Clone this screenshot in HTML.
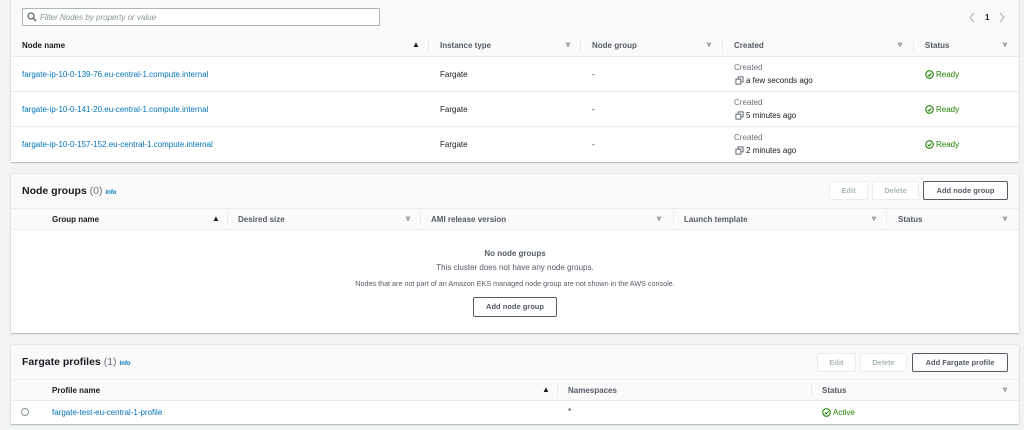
<!DOCTYPE html>
<html><head><style>
*{box-sizing:border-box;margin:0;padding:0}
body{width:1024px;height:430px;background:#f2f3f3;font-family:"Liberation Sans",sans-serif;font-size:8px;color:#16191f;position:relative;overflow:hidden}
.a{position:absolute;white-space:nowrap}
.p{position:absolute;left:11px;width:1008px;background:#fff;box-shadow:0 1px 1px rgba(0,33,43,.25),0 0 1px rgba(0,33,43,.2)}
.hd{position:absolute;left:0;width:100%;background:#fafafa;border-bottom:1px solid #eaeded}
.ch{position:absolute;left:0;width:100%;background:#fafafa;border-bottom:1px solid #eaeded;font-weight:bold;color:#545b64}
.ch.b{color:#16191f}
.sep{position:absolute;width:1px;height:12px;background:#eaeded}
.row{position:absolute;left:0;width:100%;border-bottom:1px solid #eaeded}
.lk{color:#0073bb}
.g{color:#1d8102}
.g svg,.cp svg{vertical-align:-2px;margin-right:2px}
.btn{position:absolute;height:19px;border:1px solid #aab7b8;border-radius:2px;font-weight:bold;font-size:7.5px;text-align:center;line-height:17px;background:#fff;color:#545b64}
.btn.d{border-color:#eaeded;color:#aab7b8}
.h2{font-size:10.5px;font-weight:bold}
.h2 span{font-weight:normal;color:#687078}
.info{color:#0073bb;font-size:6px;font-weight:bold;margin-left:3px}
.s{font-size:7px;color:#545b64}
</style></head><body>
<svg width="0" height="0" style="position:absolute"><defs>
<symbol id="ok" viewBox="0 0 10 10"><circle cx="5" cy="5" r="4.2" fill="none" stroke="#1d8102" stroke-width="1.2"/><path d="M3 5.1l1.5 1.5L7.2 3.8" fill="none" stroke="#1d8102" stroke-width="1.2"/></symbol>
<symbol id="cp" viewBox="0 0 10 10"><rect x="3.5" y="1" width="5.5" height="5.5" fill="none" stroke="#545b64" stroke-width="1"/><rect x="1" y="3.5" width="5.5" height="5.5" fill="#fff" stroke="#545b64" stroke-width="1"/></symbol>
</defs></svg>

<div class="p" style="top:-4px;height:166px">
 <div class="hd" style="top:0;height:39px;border:0"></div>
 <div class="a" style="left:11px;top:12px;width:358px;height:18px;border:1px solid #aab7b8;background:#fff;border-radius:1px"></div>
 <svg class="a" style="left:16px;top:16px" width="10" height="10" viewBox="0 0 10 10"><circle cx="4" cy="4" r="3" fill="none" stroke="#545b64" stroke-width="1.2"/><path d="M6.2 6.2L9 9" stroke="#545b64" stroke-width="1.3"/></svg>
 <div class="a" style="left:29px;top:17px;color:#879596;font-style:italic">Filter Nodes by property or value</div>
 <svg class="a" style="left:957px;top:16px" width="8" height="11" viewBox="0 0 8 11"><path d="M6 1L2 5.5 6 10" fill="none" stroke="#aab7b8" stroke-width="1.2"/></svg>
 <div class="a" style="left:974px;top:17px;font-weight:bold">1</div>
 <svg class="a" style="left:987px;top:16px" width="8" height="11" viewBox="0 0 8 11"><path d="M2 1l4 4.5L2 10" fill="none" stroke="#aab7b8" stroke-width="1.2"/></svg>
 <div class="ch b" style="top:39px;height:22px">
  <div class="a" style="left:11px;top:6px">Node name</div>
  <div class="a" style="left:401px;top:5px;font-size:8px">&#9650;</div>
  <div class="sep" style="left:417px;top:5px"></div>
  <div class="a" style="left:429px;top:6px;color:#545b64">Instance type</div>
  <div class="a" style="left:555px;top:5px;font-size:8px;color:#687078">&#9663;</div>
  <div class="sep" style="left:569px;top:5px"></div>
  <div class="a" style="left:581px;top:6px;color:#545b64">Node group</div>
  <div class="a" style="left:696px;top:5px;font-size:8px;color:#687078">&#9663;</div>
  <div class="sep" style="left:711px;top:5px"></div>
  <div class="a" style="left:723px;top:6px;color:#545b64">Created</div>
  <div class="a" style="left:887px;top:5px;font-size:8px;color:#687078">&#9663;</div>
  <div class="sep" style="left:902px;top:5px"></div>
  <div class="a" style="left:914px;top:6px;color:#545b64">Status</div>
  <div class="a" style="left:992px;top:5px;font-size:8px;color:#687078">&#9663;</div>
 </div>
 <div class="row" style="top:61px;height:35px">
  <div class="a lk" style="left:11px;top:13px">fargate-ip-10-0-139-76.eu-central-1.compute.internal</div>
  <div class="a" style="left:429px;top:13px">Fargate</div><div class="a" style="left:581px;top:13px">-</div>
  <div class="a" style="left:723px;top:6px;color:#687078">Created</div>
  <div class="a cp" style="left:724px;top:19px"><svg width="9" height="9"><use href="#cp"/></svg>a few seconds ago</div>
  <div class="a g" style="left:914px;top:13px"><svg width="9" height="9"><use href="#ok"/></svg>Ready</div>
 </div>
 <div class="row" style="top:96px;height:35px">
  <div class="a lk" style="left:11px;top:13px">fargate-ip-10-0-141-20.eu-central-1.compute.internal</div>
  <div class="a" style="left:429px;top:13px">Fargate</div><div class="a" style="left:581px;top:13px">-</div>
  <div class="a" style="left:723px;top:6px;color:#687078">Created</div>
  <div class="a cp" style="left:724px;top:19px"><svg width="9" height="9"><use href="#cp"/></svg>5 minutes ago</div>
  <div class="a g" style="left:914px;top:13px"><svg width="9" height="9"><use href="#ok"/></svg>Ready</div>
 </div>
 <div class="row" style="top:131px;height:35px;border:0">
  <div class="a lk" style="left:11px;top:13px">fargate-ip-10-0-157-152.eu-central-1.compute.internal</div>
  <div class="a" style="left:429px;top:13px">Fargate</div><div class="a" style="left:581px;top:13px">-</div>
  <div class="a" style="left:723px;top:6px;color:#687078">Created</div>
  <div class="a cp" style="left:724px;top:19px"><svg width="9" height="9"><use href="#cp"/></svg>2 minutes ago</div>
  <div class="a g" style="left:914px;top:13px"><svg width="9" height="9"><use href="#ok"/></svg>Ready</div>
 </div>
</div>

<div class="p" style="top:174px;height:159px">
 <div class="hd" style="top:0;height:35px"></div>
 <div class="a h2" style="left:11px;top:11px">Node groups <span>(0)</span><b class="info">Info</b></div>
 <div class="btn d" style="left:818px;top:7px;width:39px">Edit</div>
 <div class="btn d" style="left:861px;top:7px;width:47px">Delete</div>
 <div class="btn" style="left:912px;top:7px;width:85px;border-color:#545b64">Add node group</div>
 <div class="ch" style="top:35px;height:21px;color:#16191f">
  <div class="a" style="left:41px;top:6px">Group name</div>
  <div class="a" style="left:201px;top:5px;font-size:8px">&#9650;</div>
  <div class="sep" style="left:216px;top:4px"></div>
  <div class="a" style="left:227px;top:6px;color:#545b64">Desired size</div>
  <div class="a" style="left:395px;top:5px;font-size:8px;color:#687078">&#9663;</div>
  <div class="sep" style="left:409px;top:4px"></div>
  <div class="a" style="left:420px;top:6px;color:#545b64">AMI release version</div>
  <div class="a" style="left:646px;top:5px;font-size:8px;color:#687078">&#9663;</div>
  <div class="sep" style="left:662px;top:4px"></div>
  <div class="a" style="left:673px;top:6px;color:#545b64">Launch template</div>
  <div class="a" style="left:861px;top:5px;font-size:8px;color:#687078">&#9663;</div>
  <div class="sep" style="left:875px;top:4px"></div>
  <div class="a" style="left:887px;top:6px;color:#545b64">Status</div>
  <div class="a" style="left:992px;top:5px;font-size:8px;color:#687078">&#9663;</div>
 </div>
 <div class="a" style="left:0;width:100%;top:75px;text-align:center;font-weight:bold;color:#545b64">No node groups</div>
 <div class="a" style="left:0;width:100%;top:89px;text-align:center;color:#545b64">This cluster does not have any node groups.</div>
 <div class="a" style="left:0;width:100%;top:105px;text-align:center;color:#545b64;font-size:7.2px">Nodes that are not part of an Amazon EKS managed node group are not shown in the AWS console.</div>
 <div class="btn" style="left:462px;top:123px;width:84px;height:20px;line-height:18px;border-color:#545b64">Add node group</div>
</div>

<div class="p" style="top:345px;height:79px">
 <div class="hd" style="top:0;height:35px"></div>
 <div class="a h2" style="left:11px;top:11px">Fargate profiles <span>(1)</span><b class="info">Info</b></div>
 <div class="btn d" style="left:806px;top:8px;width:39px">Edit</div>
 <div class="btn d" style="left:849px;top:8px;width:47px">Delete</div>
 <div class="btn" style="left:901px;top:8px;width:96px;border-color:#545b64">Add Fargate profile</div>
 <div class="ch" style="top:35px;height:21px;color:#16191f">
  <div class="a" style="left:41px;top:6px">Profile name</div>
  <div class="a" style="left:531px;top:5px;font-size:8px">&#9650;</div>
  <div class="sep" style="left:546px;top:4px"></div>
  <div class="a" style="left:557px;top:6px;color:#545b64">Namespaces</div>
  <div class="sep" style="left:800px;top:4px"></div>
  <div class="a" style="left:811px;top:6px;color:#545b64">Status</div>
  <div class="a" style="left:992px;top:5px;font-size:8px;color:#687078">&#9663;</div>
 </div>
 <div class="a" style="left:10px;top:63px;width:8px;height:8px;border:1px solid #879596;border-radius:50%"></div>
 <div class="a lk" style="left:41px;top:63px">fargate-test-eu-central-1-profile</div>
 <div class="a" style="left:557px;top:62px">*</div>
 <div class="a g" style="left:811px;top:63px"><svg width="9" height="9"><use href="#ok"/></svg>Active</div>
</div>
</body></html>
